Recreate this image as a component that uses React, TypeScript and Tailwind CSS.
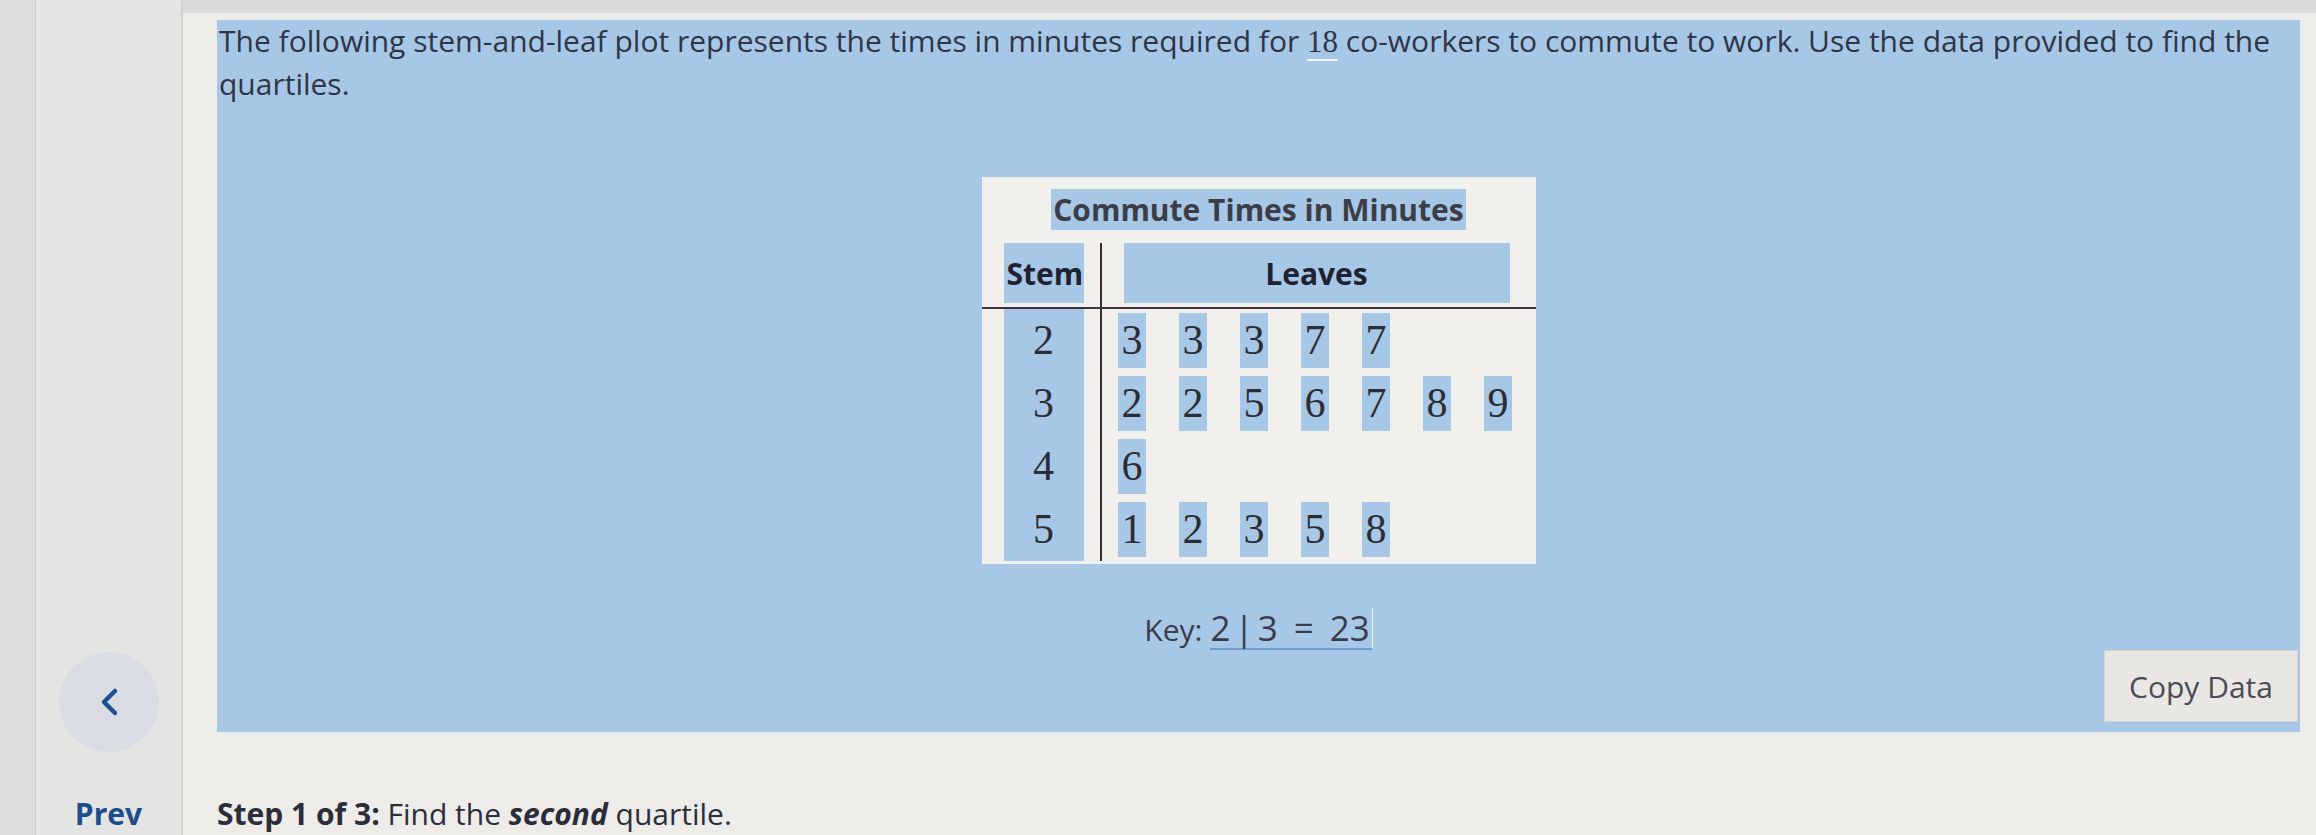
import React from "react";

const rows: { stem: number; leaves: number[] }[] = [
  { stem: 2, leaves: [3, 3, 3, 7, 7] },
  { stem: 3, leaves: [2, 2, 5, 6, 7, 8, 9] },
  { stem: 4, leaves: [6] },
  { stem: 5, leaves: [1, 2, 3, 5, 8] },
];

function StemLeafTable() {
  return (
    <div className="mx-auto mt-[72px] w-[554px] h-[388px] bg-[#f1f0ec] pt-[12px]">
      <div className="text-center">
        <span className="bg-[#a6c7e6] px-[2px] text-[30px] leading-[42px] font-bold text-[#3c3d46]">
          Commute Times in Minutes
        </span>
      </div>

      {/* header */}
      <div className="mt-[12px] flex h-[66px] border-b-2 border-[#3d3340]">
        <div className="ml-[22px] w-[80px] h-[60px] bg-[#a6c7e6] flex items-center pl-[3px] text-[30px] font-bold text-[#1f2230]">
          Stem
        </div>
        <div className="w-[16px]" />
        <div className="border-l-2 border-[#3d2a33] pl-[22px]">
          <div className="w-[386px] h-[60px] bg-[#a6c7e6] flex items-center justify-center text-[30px] font-bold text-[#1f2230]">
            Leaves
          </div>
        </div>
      </div>

      {/* body */}
      {rows.map((r) => (
        <div className="flex h-[63px]" key={r.stem}>
          <div className="ml-[22px] w-[80px] bg-[#a6c7e6] flex items-center justify-center font-['Liberation_Serif',serif] text-[42px] text-[#2c2c34]">
            {r.stem}
          </div>
          <div className="w-[16px]" />
          <div className="border-l-2 border-[#3d2a33] grid grid-cols-[repeat(7,61px)]">
            {r.leaves.map((l, i) => (
              <div className="flex items-center justify-center" key={i}>
                <div className="w-[28px] h-[55px] bg-[#a6c7e6] flex items-center justify-center font-['Liberation_Serif',serif] text-[42px] text-[#2c2c34]">
                  {l}
                </div>
              </div>
            ))}
          </div>
        </div>
      ))}
    </div>
  );
}

export default function App() {
  return (
    <div className="w-[2316px] h-[835px] overflow-hidden flex bg-[#dcdbd9] font-['Open_Sans',sans-serif]">
      {/* far left edge */}
      <div className="w-[36px] h-full bg-[#dddcda] border-r border-[#cdccca]" />

      {/* sidebar with prev */}
      <aside className="w-[147px] h-full bg-[#e4e4e2] border-r-2 border-[#d2d1cf] flex flex-col items-center pt-[652px]">
        <button className="w-[100px] h-[100px] rounded-full bg-[#d9dde3] flex items-center justify-center">
          <svg width="22" height="30" viewBox="0 0 22 30" fill="none">
            <polyline points="17,4 6,15 17,26" stroke="#1d4f91" strokeWidth="4.5" strokeLinecap="round" strokeLinejoin="round" />
          </svg>
        </button>
        <span className="mt-[42px] text-[30px] leading-[40px] font-bold text-[#1e4d8c]">Prev</span>
      </aside>

      <main className="flex-1 h-full pt-[13px]">
        <div className="h-full bg-[#edece9] pl-[34px] pr-[16px] pt-[7px]">
          <div className="h-[712px] bg-[#a6c7e6] flex flex-col">
            <p className="pl-[2px] pr-[20px] text-[30px] leading-[42px] text-[#2f3547]">
              <span>The following stem-and-leaf plot represents the times in minutes required for </span>
              <span className="underline decoration-[#f4f4f2] decoration-2 underline-offset-[7px] font-['Liberation_Serif',serif] text-[31px]">18</span>
              <span> co-workers to commute to work. Use the data provided to find the</span>{" "}
              <span>quartiles.</span>
            </p>

            <StemLeafTable />

            <div className="mt-[44px] flex items-baseline justify-center text-[#3a3c4a]">
              <span className="text-[30px] leading-[40px]">Key:</span>
              <span className="ml-[8px] flex items-baseline text-[35px] leading-[40px] border-b-2 border-[#6f9fd0] border-r border-r-[#eef0f2] pr-[2px]">
                <span>2</span>
                <span className="mx-[4px]">|</span>
                <span>3</span>
                <span className="mx-[16px]">=</span>
                <span>23</span>
              </span>
            </div>

            <button className="mt-auto self-end mr-[2px] mb-[10px] w-[194px] h-[72px] bg-[#e8e7e3] border border-[#d3d2ce] text-[30px] text-[#4b4c57]">
              Copy Data
            </button>
          </div>

          <p className="mt-[62px] text-[30px] leading-[40px] text-[#2b2e3a]">
            <span className="font-bold">Step 1 of 3:</span> Find the{" "}
            <span className="font-bold italic">second</span> quartile.
          </p>
        </div>
      </main>
    </div>
  );
}
